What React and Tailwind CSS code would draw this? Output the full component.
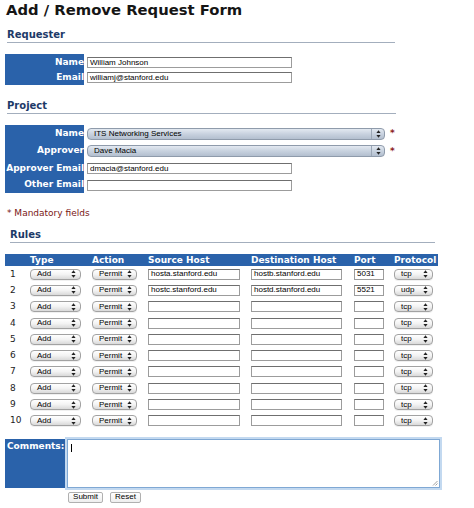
import React from "react";

const rows = [
  { type: "Add", action: "Permit", src: "hosta.stanford.edu", dst: "hostb.stanford.edu", port: "5031", proto: "tcp" },
  { type: "Add", action: "Permit", src: "hostc.stanford.edu", dst: "hostd.stanford.edu", port: "5521", proto: "udp" },
  ...Array.from({ length: 8 }, () => ({ type: "Add", action: "Permit", src: "", dst: "", port: "", proto: "tcp" })),
];

function Arrows() {
  return (
    <svg width="5" height="8" viewBox="0 0 5 8" className="shrink-0">
      <path d="M2.5 0.3 L4.6 3 L0.4 3 Z M0.4 5 L4.6 5 L2.5 7.7 Z" fill="#222" />
    </svg>
  );
}

function TextBox({ className, value }) {
  return (
    <div
      className={`${className} h-[11px] border border-[#9c9c9c] border-t-[#6f6f6f] bg-white flex items-center pl-[2px] text-[8px] leading-none text-black font-['Liberation_Sans',Arial,sans-serif] overflow-hidden whitespace-nowrap`}
    >
      {value}
    </div>
  );
}

function MiniSelect({ className, value }) {
  return (
    <div
      className={`${className} h-[11px] rounded-[4px] border border-[#a2a2a2] bg-linear-to-b from-white via-[#f3f3f3] to-[#d9d9d9] flex items-center justify-between pl-[6px] pr-[4px] text-[8px] leading-none text-black font-['Liberation_Sans',Arial,sans-serif] shadow-[0_1px_0_rgba(0,0,0,0.06)]`}
    >
      <span>{value}</span>
      <Arrows />
    </div>
  );
}

function BigSelect({ value }) {
  return (
    <div className="w-[298px] h-[12px] rounded-[4px] border border-[#8f9bab] bg-linear-to-b from-[#e3e9f1] via-[#c8d2df] to-[#b3bfcf] flex items-center text-[8px] leading-none text-black font-['Liberation_Sans',Arial,sans-serif]">
      <span className="flex-1 pl-[6px]">{value}</span>
      <div className="h-full w-[13px] border-l border-[#9ba7b6] flex items-center justify-center">
        <Arrows />
      </div>
    </div>
  );
}

function Section({ title, className }) {
  return (
    <div className={`${className} border-b border-[#a3aebd] pb-[1px] text-[10px] leading-[12px] font-bold text-[#1d3a68]`}>
      {title}
    </div>
  );
}

export default function App() {
  return (
    <div className="w-[474px] h-[508px] bg-white overflow-hidden font-['DejaVu_Sans',Verdana,sans-serif] text-black flex flex-col">
      <h1 className="ml-[6px] mt-[1px] text-[14.8px] leading-[18px] font-bold text-[#151515]">Add / Remove Request Form</h1>

      <Section title="Requester" className="ml-[7px] w-[388px] mt-[10px]" />

      <div className="flex ml-[5px] mt-[11px]">
        <div className="w-[79px] bg-[#2a62aa] pt-[1px] flex flex-col text-white text-[9px] font-bold">
          <div className="h-[15px] flex items-center justify-end">Name</div>
          <div className="h-[15px] flex items-center justify-end">Email</div>
        </div>
        <div className="ml-[3px] pt-[1px] flex flex-col">
          <div className="h-[15px] flex items-center"><TextBox className="w-[205px]" value="William Johnson" /></div>
          <div className="h-[15px] flex items-center"><TextBox className="w-[205px]" value="williamj@stanford.edu" /></div>
        </div>
      </div>

      <Section title="Project" className="ml-[7px] w-[389px] mt-[15px]" />

      <div className="flex ml-[5px] mt-[11px]">
        <div className="w-[79px] bg-[#2a62aa] flex flex-col text-white text-[9px] font-bold">
          <div className="h-[17px] flex items-center justify-end">Name</div>
          <div className="h-[18px] flex items-center justify-end">Approver</div>
          <div className="h-[17px] flex items-center justify-end">Approver Email</div>
          <div className="h-[16px] flex items-center justify-end">Other Email</div>
        </div>
        <div className="ml-[3px] flex flex-col">
          <div className="h-[17px] flex items-center">
            <BigSelect value="ITS Networking Services" />
            <span className="ml-[5px] text-[#8c1c1c] text-[9px] font-bold leading-none">*</span>
          </div>
          <div className="h-[18px] flex items-center">
            <BigSelect value="Dave Macia" />
            <span className="ml-[5px] text-[#8c1c1c] text-[9px] font-bold leading-none">*</span>
          </div>
          <div className="h-[17px] flex items-center"><TextBox className="w-[205px]" value="dmacia@stanford.edu" /></div>
          <div className="h-[16px] flex items-center"><TextBox className="w-[205px]" value="" /></div>
        </div>
      </div>

      <div className="ml-[7px] mt-[14px] text-[9px] leading-[12px] text-[#7a1616]">* Mandatory fields</div>

      <Section title="Rules" className="ml-[10px] w-[425px] mt-[10px]" />

      <div className="ml-[5px] w-[433px] mt-[11px]">
        <div className="grid grid-cols-[25px_62px_56px_103px_103px_40px_44px] h-[12px] bg-[#2a62aa] text-white text-[9px] font-bold leading-[12px]">
          <div></div>
          <div>Type</div>
          <div>Action</div>
          <div>Source Host</div>
          <div>Destination Host</div>
          <div>Port</div>
          <div>Protocol</div>
        </div>
        {rows.map((r, i) => (
          <div key={i} className="grid grid-cols-[25px_62px_56px_103px_103px_40px_44px] h-[16.3px] items-center">
            <div className="pl-[5px] text-[9px] leading-none text-[#222]">{i + 1}</div>
            <MiniSelect className="w-[51px]" value={r.type} />
            <MiniSelect className="w-[45px]" value={r.action} />
            <TextBox className="w-[92px]" value={r.src} />
            <TextBox className="w-[91px]" value={r.dst} />
            <TextBox className="w-[30px]" value={r.port} />
            <MiniSelect className="w-[39px]" value={r.proto} />
          </div>
        ))}
      </div>

      <div className="flex ml-[5px] mt-[10px]">
        <div className="w-[60px] h-[49px] bg-[#2a62aa] text-white text-[9px] font-bold leading-[12px] pl-[2px] pt-[1px]">Comments:</div>
        <div className="ml-[2px] w-[373px] h-[49px] border border-[#7fa8d4] shadow-[0_0_0_2px_#c3d9f0] bg-white relative">
          <div className="absolute left-[3px] top-[4px] w-px h-[8px] bg-black"></div>
          <svg width="6" height="6" viewBox="0 0 6 6" className="absolute right-[1px] bottom-[1px]">
            <path d="M5.5 1 L1 5.5 M5.5 3.5 L3.5 5.5" stroke="#888" strokeWidth="0.8" />
          </svg>
        </div>
      </div>

      <div className="flex ml-[68px] mt-[4px] gap-[7px]">
        <div className="w-[35px] h-[11px] rounded-[2px] border border-[#b0b0b0] bg-linear-to-b from-white to-[#eeeeee] flex items-center justify-center text-[8px] leading-none font-['Liberation_Sans',Arial,sans-serif]">Submit</div>
        <div className="w-[31px] h-[11px] rounded-[2px] border border-[#b0b0b0] bg-linear-to-b from-white to-[#eeeeee] flex items-center justify-center text-[8px] leading-none font-['Liberation_Sans',Arial,sans-serif]">Reset</div>
      </div>
    </div>
  );
}
